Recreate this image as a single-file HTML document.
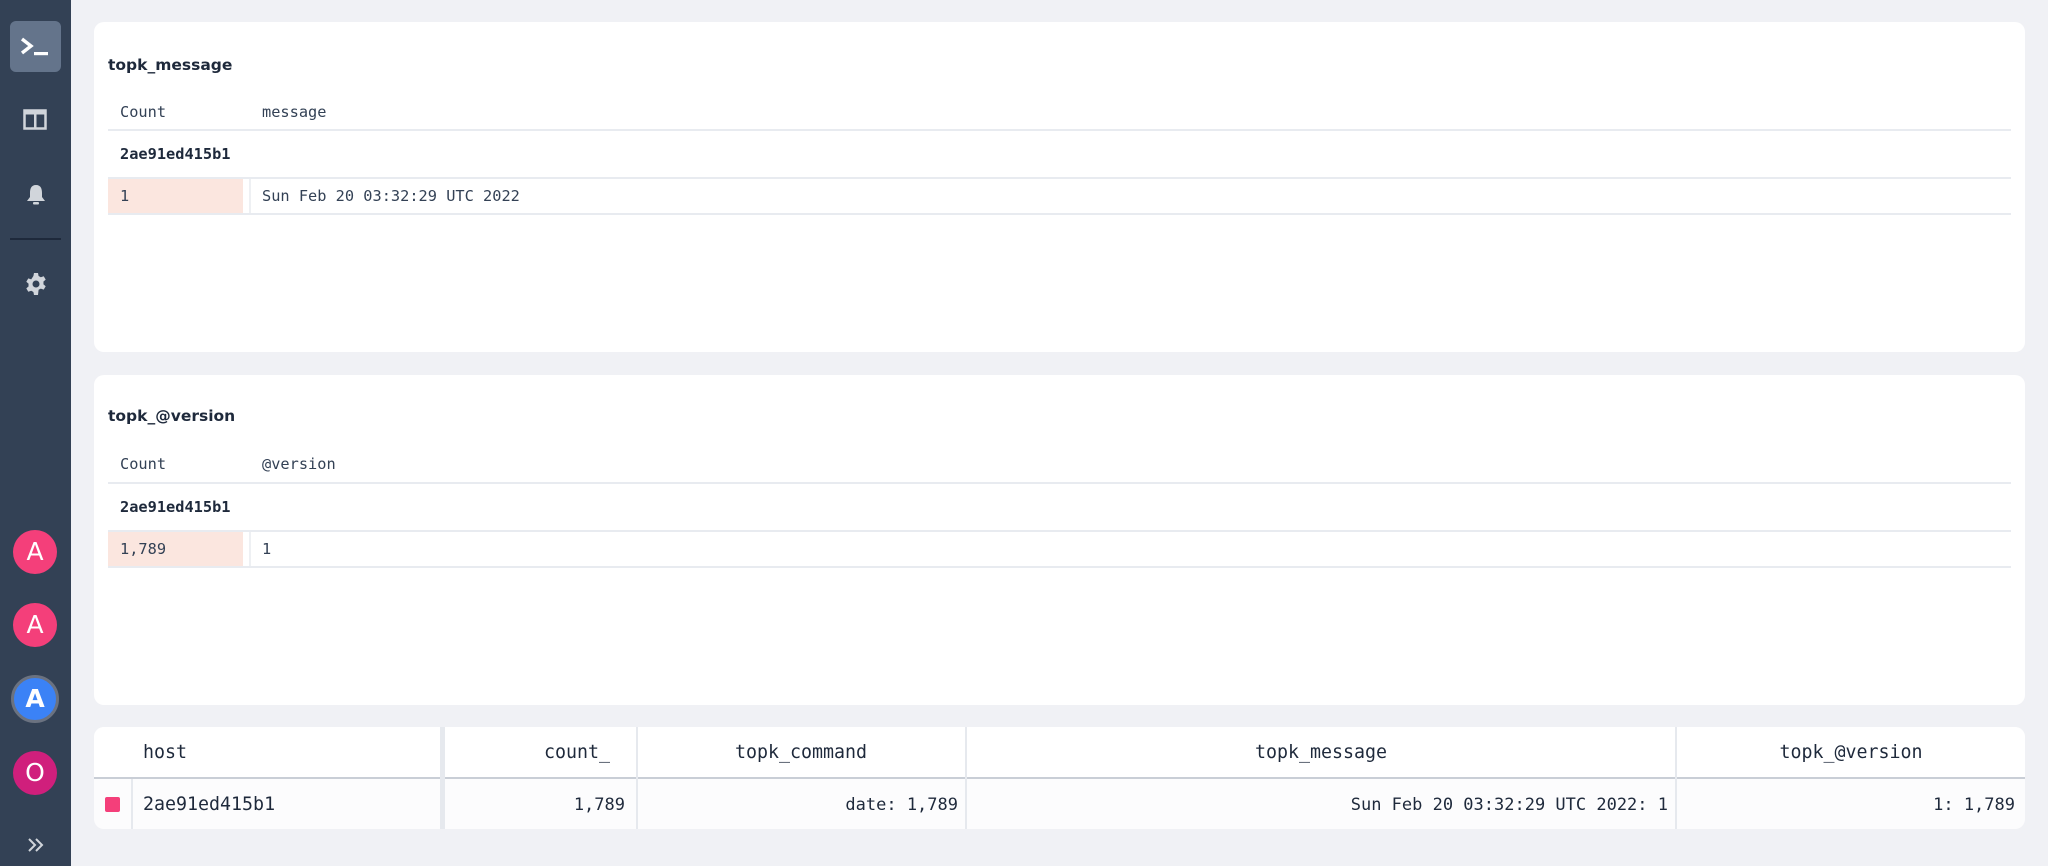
<!DOCTYPE html>
<html><head><meta charset="utf-8"><style>
*{box-sizing:border-box;margin:0;padding:0}
body{width:2048px;height:866px;background:#f0f1f5;position:relative;overflow:hidden;font-family:"DejaVu Sans Mono","Liberation Mono",monospace;color:#1e293b}
.sb{position:absolute;left:0;top:0;width:71px;height:866px;background:#334155}
.ab{position:absolute}
.card{position:absolute;left:94px;width:1931px;background:#fff;border-radius:10px}
.title{position:absolute;left:14px;font-family:"DejaVu Sans","Liberation Sans",sans-serif;font-weight:bold;font-size:15.5px;color:#1e293b}
.t{position:absolute;font-size:15.3px;color:#334155;white-space:nowrap}
.ln{position:absolute;left:14px;right:14px;height:2px;background:#e8ebf0}
.av{position:absolute;left:13px;width:44px;height:44px;border-radius:50%;color:#fff;font-family:"DejaVu Sans",sans-serif;font-size:25px;text-align:center;line-height:44px}
.bt{position:absolute;font-size:17px;white-space:nowrap;color:#1e293b}
.bh{font-size:18.3px}
.vl{position:absolute;width:2px;background:#e6e9ee}
</style></head><body>
<div class="sb">
 <div class="ab" style="left:10px;top:21px;width:51px;height:51px;background:#64748b;border-radius:6px"></div>
 <svg class="ab" style="left:10px;top:21px" width="51" height="51"><path d="M12 18 L21 25 L12 32" stroke="#fff" stroke-width="3.4" fill="none"/><rect x="24" y="31" width="14" height="3.2" fill="#fff"/></svg>
 <svg class="ab" style="left:23px;top:109px" width="25" height="22"><rect x="1.5" y="1.5" width="21" height="18" fill="none" stroke="#d1d5db" stroke-width="2.5"/><rect x="1.5" y="1.5" width="21" height="4" fill="#d1d5db"/><rect x="11" y="3" width="2.5" height="17" fill="#d1d5db"/></svg>
 <svg class="ab" style="left:25px;top:183px" width="22" height="24"><path d="M11 2 C6 2 5 6 5 10 L5 14 L2 18 L20 18 L17 14 L17 10 C17 6 16 2 11 2Z" fill="#d1d5db"/><rect x="8" y="19" width="6" height="2.5" rx="1" fill="#d1d5db"/></svg>
 <div class="ab" style="left:10px;top:238px;width:51px;height:2px;background:#1e293b"></div>
 <svg class="ab" style="left:24px;top:272px" width="24" height="24" viewBox="0 0 24 24"><path fill="#d1d5db" fill-rule="evenodd" d="M10 1h4l.6 3 2.2 1.2 2.9-1 2 3.4-2.3 2a7 7 0 010 2.6l2.3 2-2 3.4-2.9-1-2.2 1.2L14 23h-4l-.6-3-2.2-1.2-2.9 1-2-3.4 2.3-2a7 7 0 010-2.6l-2.3-2 2-3.4 2.9 1L9.4 4zM12 8.5a3.5 3.5 0 100 7 3.5 3.5 0 000-7z"/></svg>
 <div class="av" style="top:530px;background:#f43f7a">A</div>
 <div class="av" style="top:603px;background:#f43f7a">A</div>
 <div class="av" style="top:675px;left:11px;width:48px;height:48px;line-height:42px;background:#3b82f6;border:3px solid #6b7280;font-weight:bold">A</div>
 <div class="av" style="top:751px;background:#d01f7c">O</div>
 <svg class="ab" style="left:26px;top:837px" width="20" height="16"><path d="M3 2l6 6-6 6M10 2l6 6-6 6" stroke="#d1d5db" stroke-width="2" fill="none"/></svg>
</div>

<div class="card" style="top:22px;height:330px">
 <div class="title" style="top:34px">topk_message</div>
 <div class="t" style="left:26px;top:81px">Count</div>
 <div class="t" style="left:168px;top:81px">message</div>
 <div class="ln" style="top:107px"></div>
 <div class="t" style="left:26px;top:123px;font-weight:bold;color:#1e293b">2ae91ed415b1</div>
 <div class="ln" style="top:155px"></div>
 <div class="ab" style="left:14px;top:157px;width:135px;height:35px;background:#fbe6df"></div>
 <div class="ab" style="left:155px;top:157px;width:2px;height:35px;background:#eef0f3"></div>
 <div class="t" style="left:26px;top:165px">1</div>
 <div class="t" style="left:168px;top:165px">Sun Feb 20 03:32:29 UTC 2022</div>
 <div class="ln" style="top:191px"></div>
</div>

<div class="card" style="top:375px;height:330px">
 <div class="title" style="top:32px">topk_@version</div>
 <div class="t" style="left:26px;top:80px">Count</div>
 <div class="t" style="left:168px;top:80px">@version</div>
 <div class="ln" style="top:107px"></div>
 <div class="t" style="left:26px;top:123px;font-weight:bold;color:#1e293b">2ae91ed415b1</div>
 <div class="ln" style="top:155px"></div>
 <div class="ab" style="left:14px;top:157px;width:135px;height:35px;background:#fbe6df"></div>
 <div class="ab" style="left:155px;top:157px;width:2px;height:35px;background:#eef0f3"></div>
 <div class="t" style="left:26px;top:165px">1,789</div>
 <div class="t" style="left:168px;top:165px">1</div>
 <div class="ln" style="top:191px"></div>
</div>

<div class="card" style="top:727px;height:102px;background:#fcfcfd">
 <div class="ab" style="left:0;top:0;width:1931px;height:51px;background:#fff;border-radius:10px 10px 0 0"></div>
 <div class="ab" style="left:0;top:50px;width:1931px;height:2px;background:#c9ced6"></div>
 <div class="vl" style="left:346px;top:0;height:102px;width:5px;background:#e6e9ee"></div>
 <div class="vl" style="left:542px;top:0;height:102px"></div>
 <div class="vl" style="left:871px;top:0;height:102px"></div>
 <div class="vl" style="left:1581px;top:0;height:102px"></div>
 <div class="vl" style="left:37px;top:52px;height:50px"></div>
 <div class="ab" style="left:11px;top:70px;width:15px;height:15px;background:#f43f7a;border-radius:2px"></div>
 <div class="bt bh" style="left:49px;top:15px">host</div>
 <div class="bt bh" style="right:1415px;top:15px">count_</div>
 <div class="bt bh" style="left:543px;width:328px;text-align:center;top:15px">topk_command</div>
 <div class="bt bh" style="left:873px;width:708px;text-align:center;top:15px">topk_message</div>
 <div class="bt bh" style="left:1583px;width:348px;text-align:center;top:15px">topk_@version</div>
 <div class="bt bh" style="left:49px;top:67px">2ae91ed415b1</div>
 <div class="bt" style="right:1400px;top:68px">1,789</div>
 <div class="bt" style="right:1067px;top:68px">date: 1,789</div>
 <div class="bt" style="right:357px;top:68px">Sun Feb 20 03:32:29 UTC 2022: 1</div>
 <div class="bt" style="right:10px;top:68px">1: 1,789</div>
</div>
</body></html>
